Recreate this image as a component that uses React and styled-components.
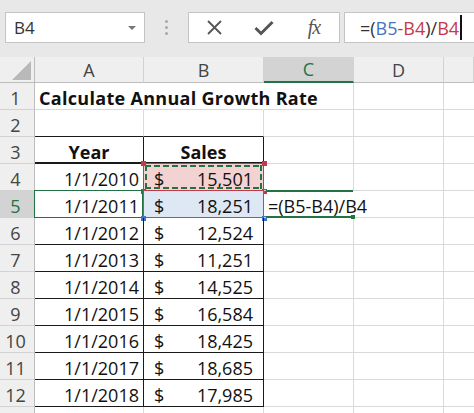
import React from 'react';
import styled, { createGlobalStyle } from 'styled-components';

const GlobalStyle = createGlobalStyle`
    html, body {
        margin: 0;
        padding: 0;
        background: #fff;
        overflow: hidden;
    }
    body {
        font-family: "Open Sans", "Noto Sans", sans-serif;
    }
`;

const GRID = '#d9d9d9';
const INK = '1px solid #1a1a1a';
const GREEN = '#217346';
const RED = '#c8374a';
const BLUE = '#4472c4';

const rows = [
    { n: 1, a: 'Calculate Annual Growth Rate', title: true },
    { n: 2 },
    { n: 3, a: 'Year', b: 'Sales', head: true },
    { n: 4, a: '1/1/2010', b: '15,501' },
    { n: 5, a: '1/1/2011', b: '18,251', c: '=(B5-B4)/B4' },
    { n: 6, a: '1/1/2012', b: '12,524' },
    { n: 7, a: '1/1/2013', b: '11,251' },
    { n: 8, a: '1/1/2014', b: '14,525' },
    { n: 9, a: '1/1/2015', b: '16,584' },
    { n: 10, a: '1/1/2016', b: '18,425' },
    { n: 11, a: '1/1/2017', b: '18,685' },
    { n: 12, a: '1/1/2018', b: '17,985' },
    { n: 13, hidden: true },
];

function App() {
    return (
        <>
            <GlobalStyle />
            <Window>
                <FormulaBar>
                    <NameBox>
                        <NameText>B4</NameText>
                        <Caret />
                    </NameBox>
                    <Grip>
                        <Dot />
                        <Dot />
                        <Dot />
                    </Grip>
                    <ButtonBox>
                        <BarButton>
                            <svg width="17" height="17" viewBox="0 0 17 17">
                                <path d="M2 2 L15 15 M15 2 L2 15" stroke="#555" strokeWidth="1.8" fill="none" />
                            </svg>
                        </BarButton>
                        <BarButton>
                            <svg width="20" height="16" viewBox="0 0 20 16">
                                <path d="M1.5 8 L7 13.5 L18.5 2" stroke="#555" strokeWidth="3" fill="none" />
                            </svg>
                        </BarButton>
                        <BarButton>
                            <Fx>fx</Fx>
                        </BarButton>
                    </ButtonBox>
                    <FormulaInput>
                        <Token>=(</Token>
                        <Token $color={BLUE}>B5</Token>
                        <Token $color={RED}>-B4</Token>
                        <Token>)/</Token>
                        <Token $color={RED}>B4</Token>
                        <Cursor />
                    </FormulaInput>
                </FormulaBar>

                <Sheet>
                    <Corner>
                        <svg width="19" height="19" viewBox="0 0 19 19">
                            <polygon points="0,19 19,19 19,0" fill="#b9b9b9" />
                        </svg>
                    </Corner>
                    <ColHead>A</ColHead>
                    <ColHead>B</ColHead>
                    <ColHead $active>C</ColHead>
                    <ColHead>D</ColHead>
                    <ColHead />

                    {rows.map((row) => {
                        const inTable = row.n >= 3 && row.n <= 12;
                        const tableTop = row.n === 2;
                        const bottom = row.n === 3
                            ? '2px solid #1a1a1a'
                            : (inTable || tableTop) ? INK : `1px solid ${GRID}`;
                        return (
                            <React.Fragment key={row.n}>
                                <RowHead $active={row.n === 5}>{row.hidden ? '' : row.n}</RowHead>

                                <Cell
                                    $b={bottom}
                                    $r={row.title ? '1px solid transparent' : inTable ? INK : undefined}
                                    $align={row.head ? 'center' : row.title ? 'flex-start' : 'flex-end'}
                                    $bold={row.title || row.head}
                                    $title={row.title}
                                    $front={row.title}
                                >
                                    {row.a}
                                    {row.n === 5 && <Outline $color={GREEN} />}
                                </Cell>

                                <Cell
                                    $b={bottom}
                                    $r={row.title ? '1px solid transparent' : inTable ? INK : undefined}
                                    $align={row.head ? 'center' : 'space-between'}
                                    $bold={row.head}
                                    $fill={row.n === 4 ? '#f3d2d2' : row.n === 5 ? '#dee8f5' : undefined}
                                    $pad="0 10px"
                                >
                                    {row.b && !row.head && <span>$</span>}
                                    {row.b && <span>{row.b}</span>}
                                    {row.n === 4 && (
                                        <RefBox $color={RED}>
                                            <Ants />
                                            <Handle $color={RED} $x="left" $y="top" />
                                            <Handle $color={RED} $x="right" $y="top" />
                                            <Handle $color={RED} $x="left" $y="bottom" />
                                            <Handle $color={RED} $x="right" $y="bottom" />
                                        </RefBox>
                                    )}
                                    {row.n === 5 && (
                                        <RefBox $color={BLUE} $noTop>
                                            <Handle $color={BLUE} $x="left" $y="bottom" />
                                            <Handle $color={BLUE} $x="right" $y="bottom" />
                                        </RefBox>
                                    )}
                                </Cell>

                                <Cell
                                    $r={row.n === 5 ? '1px solid transparent' : undefined}
                                    $align="flex-start"
                                    $front={row.n === 5}
                                >
                                    {row.c}
                                    {row.n === 5 && (
                                        <EditEdge>
                                            <EditHandle />
                                        </EditEdge>
                                    )}
                                </Cell>

                                <Cell />
                                <Cell $r="none" />
                            </React.Fragment>
                        );
                    })}
                </Sheet>
            </Window>
        </>
    );
}

const Window = styled.div`
    width: 474px;
    height: 413px;
    overflow: hidden;
    display: flex;
    flex-direction: column;
    background: #fff;
`;

const FormulaBar = styled.div`
    height: 57px;
    box-sizing: border-box;
    padding: 12px 0 0 5px;
    display: flex;
    align-items: flex-start;
    background: #e8e8e8;
    flex-shrink: 0;
`;

const Box = styled.div`
    height: 31px;
    box-sizing: border-box;
    background: #fff;
    border: 1px solid #c4c4c4;
`;

const NameBox = styled(Box)`
    width: 140px;
    display: flex;
    align-items: center;
    justify-content: space-between;
    padding: 0 8px 0 8px;
`;

const NameText = styled.span`
    font-family: "Open Sans", sans-serif;
    font-size: 17px;
    color: #333;
`;

const Caret = styled.span`
    width: 0;
    height: 0;
    border-left: 4px solid transparent;
    border-right: 4px solid transparent;
    border-top: 4px solid #777;
    margin-top: 1px;
`;

const Grip = styled.div`
    width: 43px;
    height: 31px;
    display: flex;
    flex-direction: column;
    align-items: center;
    justify-content: center;
    gap: 3px;
`;

const Dot = styled.span`
    width: 3px;
    height: 3px;
    border-radius: 50%;
    background: #a8a8a8;
`;

const ButtonBox = styled(Box)`
    width: 152px;
    display: flex;
`;

const BarButton = styled.div`
    flex: 1;
    display: flex;
    align-items: center;
    justify-content: center;
`;

const Fx = styled.span`
    font-family: "Liberation Serif", "DejaVu Serif", serif;
    font-style: italic;
    font-size: 20px;
    color: #555;
    letter-spacing: -1px;
`;

const FormulaInput = styled(Box)`
    flex: 1;
    margin-left: 4px;
    border-right: none;
    display: flex;
    align-items: center;
    padding-left: 15px;
    font-family: "Open Sans", sans-serif;
    font-size: 18px;
    color: #333;
`;

const Token = styled.span`
    color: ${({ $color }) => $color || '#333'};
`;

const Cursor = styled.span`
    width: 0;
    height: 25px;
    border-left: 2px solid #111;
    margin-left: 1px;
`;

const Sheet = styled.div`
    display: grid;
    grid-template-columns: 35px 109px 120px 90px 90px 1fr;
    grid-template-rows: 26px;
    grid-auto-rows: 27px;
    font-family: "Open Sans", sans-serif;
    font-size: 18px;
    color: #111;
`;

const HeadBase = styled.div`
    box-sizing: border-box;
    display: flex;
    align-items: center;
    justify-content: center;
    background: #efefef;
    color: #444;
    border-right: 1px solid #d2d2d2;
    border-bottom: 1px solid #d2d2d2;
`;

const Corner = styled(HeadBase)`
    align-items: flex-end;
    justify-content: flex-end;
    padding: 0 3px 2px 0;
    border-right-color: #bdbdbd;
    border-bottom-color: #bdbdbd;
`;

const ColHead = styled(HeadBase)`
    font-size: 18px;
    border-bottom: ${({ $active }) => ($active ? `2px solid ${GREEN}` : '1px solid #bdbdbd')};
    background: ${({ $active }) => ($active ? '#d3d3d3' : '#efefef')};
    color: ${({ $active }) => ($active ? GREEN : '#444')};
`;

const RowHead = styled(HeadBase)`
    font-size: 18px;
    padding: 4px 3px 0 0;
    border-right-color: #bdbdbd;
    background: ${({ $active }) => ($active ? '#d3d3d3' : '#efefef')};
    color: ${({ $active }) => ($active ? GREEN : '#444')};
`;

const Cell = styled.div`
    position: relative;
    z-index: ${({ $front }) => ($front ? 2 : 'auto')};
    box-sizing: border-box;
    display: flex;
    align-items: center;
    justify-content: ${({ $align }) => $align || 'flex-start'};
    padding: ${({ $pad }) => $pad || '0 4px'};
    padding-top: 4px;
    white-space: nowrap;
    font-weight: ${({ $bold }) => ($bold ? 700 : 400)};
    letter-spacing: ${({ $title }) => ($title ? '0.3px' : 'normal')};
    background: ${({ $fill }) => $fill || 'transparent'};
    border-right: ${({ $r }) => $r || `1px solid ${GRID}`};
    border-bottom: ${({ $b }) => $b || `1px solid ${GRID}`};
`;

const Outline = styled.span`
    position: absolute;
    top: -1px;
    left: -1px;
    right: 0;
    bottom: -1px;
    border: 1.5px solid ${({ $color }) => $color};
    pointer-events: none;
`;

const RefBox = styled.span`
    position: absolute;
    top: ${({ $noTop }) => ($noTop ? '0' : '-1px')};
    left: -1px;
    right: -1px;
    bottom: -1px;
    border: 1.5px solid ${({ $color }) => $color};
    border-top: ${({ $noTop, $color }) => ($noTop ? 'none' : `1.5px solid ${$color}`)};
    pointer-events: none;
`;

const Ants = styled.span`
    position: absolute;
    inset: 1px;
    background:
        repeating-linear-gradient(90deg, ${GREEN} 0 6px, transparent 6px 9px) top / 100% 2px no-repeat,
        repeating-linear-gradient(90deg, ${GREEN} 0 6px, transparent 6px 9px) bottom / 100% 2px no-repeat,
        repeating-linear-gradient(180deg, ${GREEN} 0 6px, transparent 6px 9px) left / 2px 100% no-repeat,
        repeating-linear-gradient(180deg, ${GREEN} 0 6px, transparent 6px 9px) right / 2px 100% no-repeat;
`;

const Handle = styled.span`
    position: absolute;
    width: 5px;
    height: 5px;
    background: ${({ $color }) => $color};
    ${({ $x }) => $x}: -3.5px;
    ${({ $y }) => $y}: -3.5px;
`;

const EditEdge = styled.span`
    position: absolute;
    top: -1px;
    left: 2px;
    right: 0;
    bottom: -1px;
    border-top: 2px solid ${GREEN};
    border-bottom: 2px solid ${GREEN};
    pointer-events: none;
`;

const EditHandle = styled.span`
    position: absolute;
    right: -2px;
    bottom: -3px;
    width: 4px;
    height: 4px;
    background: ${GREEN};
`;

export default App;
